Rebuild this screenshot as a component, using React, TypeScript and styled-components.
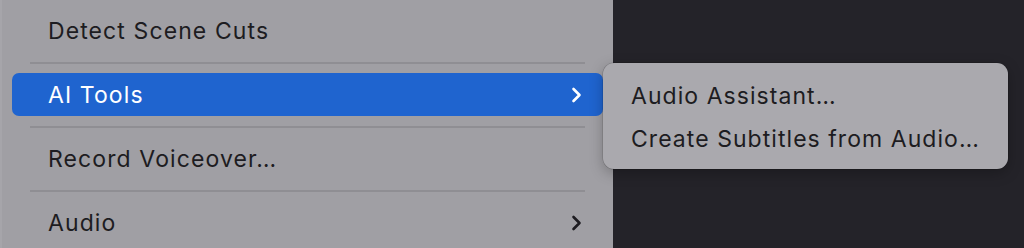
import React from 'react';
import styled, { createGlobalStyle } from 'styled-components';

const GlobalStyle = createGlobalStyle`
    html, body {
        margin: 0;
        padding: 0;
        background: #242329;
    }
    body {
        font-family: Inter, "Noto Sans", "Liberation Sans", sans-serif;
        -webkit-font-smoothing: antialiased;
    }
`;

const Page = styled.div`
    position: relative;
    display: flex;
    width: 1024px;
    height: 248px;
    overflow: hidden;
    background: #242329;
`;

const Menu = styled.ul`
    list-style: none;
    margin: 0;
    width: 613px;
    box-sizing: border-box;
    padding: 9px 10px 0 10px;
    background: #a09fa4;
    border-left: 2px solid #a6a5aa;
    display: flex;
    flex-direction: column;
`;

const Item = styled.li<{ active?: boolean }>`
    display: flex;
    align-items: center;
    justify-content: space-between;
    flex: none;
    height: 43px;
    padding: 0 21px 0 36px;
    border-radius: 7px;
    font-size: 23px;
    letter-spacing: 1.1px;
    color: ${ props => props.active ? '#ffffff' : '#1d1c21' };
    background: ${ props => props.active ? '#1f64cf' : 'transparent' };
`;

const Separator = styled.li`
    flex: none;
    height: 21px;
    display: flex;
    align-items: center;
    margin: 0 18px;

    &::after {
        content: '';
        display: block;
        width: 100%;
        height: 2px;
        background: #8f8e93;
    }
`;

const Submenu = styled.ul`
    position: absolute;
    left: 603px;
    top: 63px;
    width: 405px;
    height: 106px;
    box-sizing: border-box;
    margin: 0;
    padding: 11px 0 0 28px;
    list-style: none;
    background: #aaa9ae;
    border-radius: 11px;
    box-shadow: 0 4px 14px rgba(0, 0, 0, 0.25), 0 0 0 0.5px rgba(0, 0, 0, 0.2);
`;

const SubItem = styled.li`
    height: 43px;
    display: flex;
    align-items: center;
    font-size: 23px;
    letter-spacing: 1.05px;
    color: #1d1c21;
`;

const Chevron = ({ color }: { color: string }) => (
    <svg width="11" height="16" viewBox="0 0 11 16">
        <path d="M2.5 2 L8.5 8 L2.5 14" fill="none" stroke={color} strokeWidth="2.6" strokeLinecap="round" strokeLinejoin="round" />
    </svg>
);

const App = () => {
    return (
        <Page>
            <GlobalStyle />
            <Menu>
                <Item>Detect Scene Cuts</Item>
                <Separator />
                <Item active>
                    AI Tools
                    <Chevron color="#ffffff" />
                </Item>
                <Separator />
                <Item>Record Voiceover…</Item>
                <Separator />
                <Item>
                    Audio
                    <Chevron color="#1d1c21" />
                </Item>
            </Menu>
            <Submenu>
                <SubItem>Audio Assistant…</SubItem>
                <SubItem>Create Subtitles from Audio…</SubItem>
            </Submenu>
        </Page>
    );
};

export default App;
